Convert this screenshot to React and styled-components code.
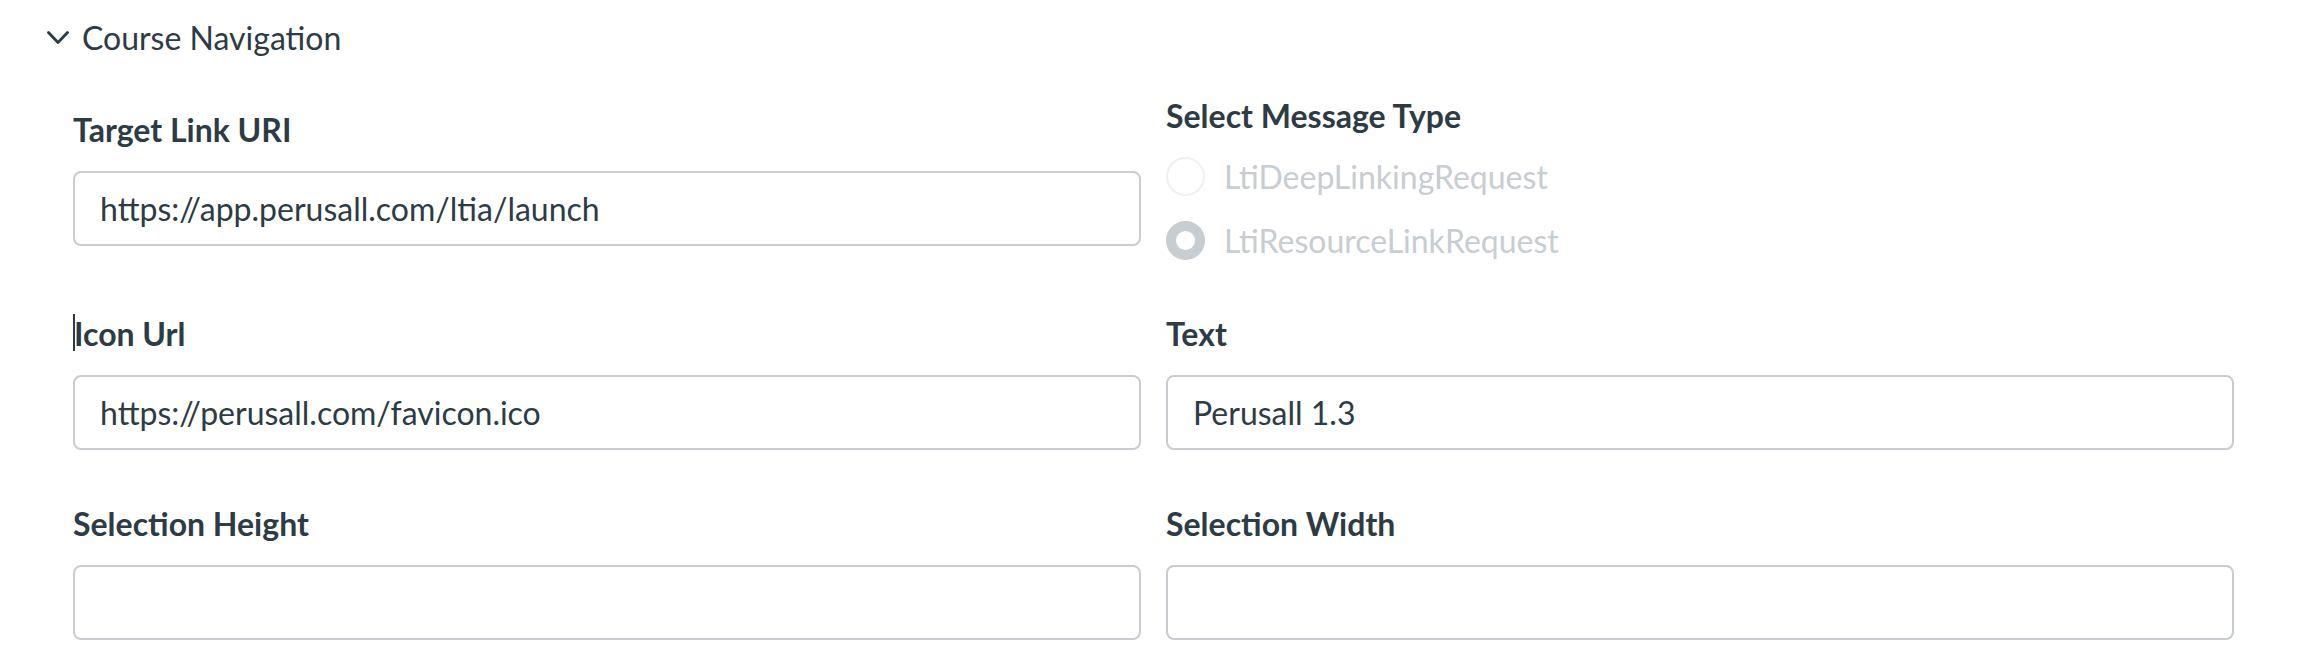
import React from 'react';
import styled, { createGlobalStyle } from 'styled-components';

const GlobalStyle = createGlobalStyle`
  html, body {
    margin: 0;
    padding: 0;
    background: #ffffff;
  }
  body {
    font-family: Lato, "Noto Sans", "Liberation Sans", sans-serif;
    color: #2d3b45;
  }
`;

const Page = styled.div`
  padding-top: 18px;
  width: 2300px;
  box-sizing: border-box;
`;

// Collapsible section header (chevron + title)
const SectionToggle = styled.div`
  display: flex;
  align-items: center;
  gap: 13px;
  padding-left: 47px;
  height: 39px;
  font-size: 32px;
  line-height: 39px;
  color: #2d3b45;
`;

const Chevron = styled.svg`
  width: 22px;
  height: 14px;
  flex: none;
`;

// Two-column form grid, rows centred against each other
const FieldGrid = styled.div`
  display: grid;
  grid-template-columns: 1fr 1fr;
  column-gap: 25px;
  row-gap: 54px;
  align-items: center;
  margin-top: 39px;
  padding: 0 66px 0 73px;
`;

const Field = styled.div`
  display: flex;
  flex-direction: column;
`;

const Label = styled.div`
  font-size: 32px;
  line-height: 39px;
  font-weight: 700;
  color: #2d3b45;
  margin-bottom: 22px;
`;

const Caret = styled.span`
  display: inline-block;
  width: 2px;
  height: 37px;
  background: #2d3b45;
  vertical-align: top;
  margin-right: -1px;
`;

const TextInput = styled.input`
  box-sizing: border-box;
  width: 100%;
  height: 75px;
  border: 2px solid #c7cdd1;
  border-radius: 8px;
  padding: 0 25px;
  font-family: Lato, "Noto Sans", "Liberation Sans", sans-serif;
  font-size: 32px;
  color: #2d3b45;
  background: #ffffff;
  outline: none;
`;

const RadioGroup = styled.div`
  display: flex;
  flex-direction: column;
  gap: 25px;
`;

const RadioRow = styled.label`
  display: flex;
  align-items: center;
  gap: 19px;
  height: 39px;
  font-size: 32px;
  color: #c7cdd1;
  cursor: not-allowed;
`;

const RadioFacade = styled.span`
  box-sizing: border-box;
  width: 39px;
  height: 39px;
  border-radius: 50%;
  flex: none;
  border: ${({ checked }) => (checked ? '10.5px solid #c7cdd1' : '2px solid #eef0f1')};
  background: #ffffff;
`;

const fields = [
  { label: 'Target Link URI', value: 'https://app.perusall.com/ltia/launch' },
  { label: 'Select Message Type', radios: true },
  { label: 'Icon Url', value: 'https://perusall.com/favicon.ico', caret: true },
  { label: 'Text', value: 'Perusall 1.3' },
  { label: 'Selection Height', value: '' },
  { label: 'Selection Width', value: '' },
];

const messageTypes = [
  { name: 'LtiDeepLinkingRequest', checked: false },
  { name: 'LtiResourceLinkRequest', checked: true },
];

export default function App() {
  return (
    <Page>
      <GlobalStyle />
      <SectionToggle>
        <Chevron viewBox="0 0 22 14">
          <polyline points="1.5,1.5 11,11.5 20.5,1.5" fill="none" stroke="#2d3b45" strokeWidth="2.8" strokeLinecap="round" strokeLinejoin="round" />
        </Chevron>
        Course Navigation
      </SectionToggle>
      <FieldGrid>
        {fields.map((f) => (
          <Field key={f.label}>
            <Label>
              {f.caret && <Caret />}
              {f.label}
            </Label>
            {f.radios ? (
              <RadioGroup>
                {messageTypes.map((m) => (
                  <RadioRow key={m.name}>
                    <RadioFacade checked={m.checked} />
                    {m.name}
                  </RadioRow>
                ))}
              </RadioGroup>
            ) : (
              <TextInput readOnly value={f.value} />
            )}
          </Field>
        ))}
      </FieldGrid>
    </Page>
  );
}
